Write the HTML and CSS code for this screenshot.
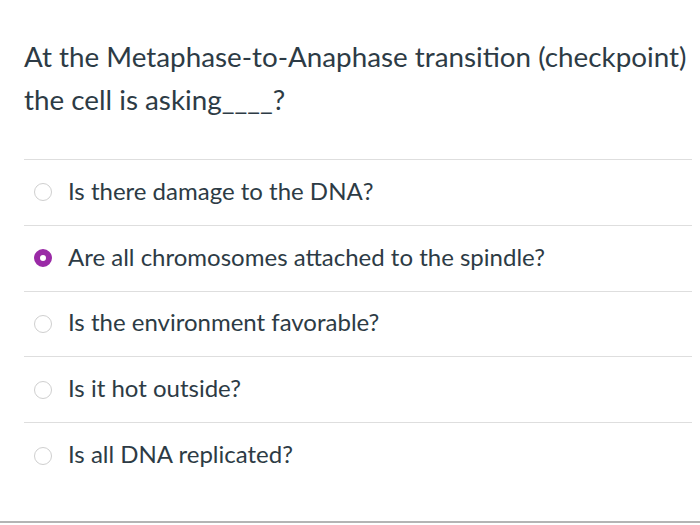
FILE: index.html
```html
<!DOCTYPE html>
<html>
<head>
<meta charset="utf-8">
<link rel="stylesheet" href="styles.css">
</head>
<body>
<div class="page">
  <div class="question">
    <p class="prompt">At the Metaphase-to-Anaphase transition (checkpoint) the cell is asking____?</p>
    <ul class="answers">
      <li class="answer"><span class="radio"></span><span class="label">Is there damage to the DNA?</span></li>
      <li class="answer"><span class="radio checked"></span><span class="label">Are all chromosomes attached to the spindle?</span></li>
      <li class="answer"><span class="radio"></span><span class="label">Is the environment favorable?</span></li>
      <li class="answer"><span class="radio"></span><span class="label">Is it hot outside?</span></li>
      <li class="answer"><span class="radio"></span><span class="label">Is all DNA replicated?</span></li>
    </ul>
  </div>
</div>
</body>
</html>
```
FILE: styles.css
```css
html, body {
  margin: 0;
  padding: 0;
  background: #fff;
}
body {
  font-family: Lato, "Open Sans", sans-serif;
  color: #2d3b45;
  height: 525px;
}
.page {
  width: 700px;
  height: 523px;
  box-sizing: border-box;
  border-bottom: 2px solid #b4b4b4;
  padding: 0 8px 0 24px;
  overflow: hidden;
}
.prompt {
  margin: 0;
  padding-top: 36px;
  font-size: 27.8px;
  line-height: 42.5px;
  width: 668px;
}
.answers {
  list-style: none;
  margin: 38px 0 0 0;
  padding: 0;
}
.answer {
  display: flex;
  align-items: center;
  height: 64.8px;
  border-top: 1px solid #dedede;
  font-size: 24px;
}
.label {
  padding-bottom: 4px;
}
.radio {
  flex: none;
  width: 18px;
  height: 18px;
  border: 1px solid #cfcfcf;
  border-radius: 50%;
  margin-left: 10px;
  margin-right: 16px;
  box-sizing: border-box;
  background: #fff;
}
.radio.checked {
  border: 6px solid #9a2aa6;
}
```
